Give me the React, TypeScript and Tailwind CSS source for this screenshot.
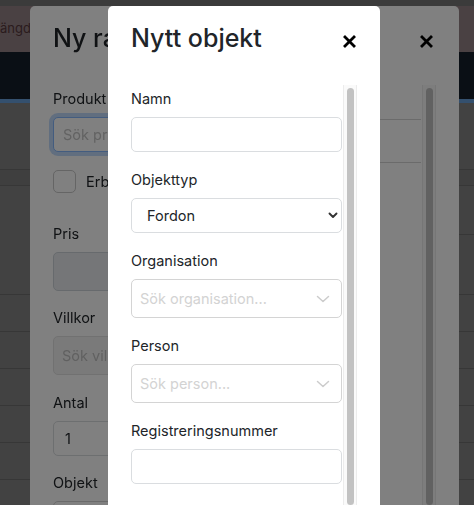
import React from 'react';

const rowLines = [37, 37, 37, 37, 37];

function CloseIcon() {
  return (
    <svg width="13" height="13" viewBox="0 0 13 13" className="mt-[12px] shrink-0">
      <path d="M2 2L11 11M11 2L2 11" stroke="#000" strokeWidth="2.8" strokeLinecap="square" />
    </svg>
  );
}

function ModalHeader({ title, pr }: { title: string; pr: string }) {
  return (
    <div className={`flex h-[79px] shrink-0 items-start justify-between pl-[23px] pt-[17px] ${pr}`}>
      <h2 className="whitespace-nowrap text-[25px] font-medium leading-[30px] text-[#212529]">{title}</h2>
      <CloseIcon />
    </div>
  );
}

function Scrollbar() {
  return (
    <div className="ml-px w-[14px] shrink-0 border-x border-[#ececec] bg-[#fafafa] pt-[3px]">
      <div className="mx-auto h-full w-[7px] rounded-full bg-[#c2c2c2]" />
    </div>
  );
}

function Label({ children }: { children: React.ReactNode }) {
  return <div className="mb-[7px] h-[22px] whitespace-nowrap text-[14.5px] leading-[22px] text-[#212529]">{children}</div>;
}

function Field({ label, mb = 'mb-[17px]', children }: { label: string; mb?: string; children: React.ReactNode }) {
  return (
    <div className={mb}>
      <Label>{label}</Label>
      {children}
    </div>
  );
}

function TextInput({ value }: { value?: string }) {
  return (
    <div className="flex h-[35px] items-center rounded-[5px] border border-[#dadde0] bg-white pl-[11px] text-[14.5px] text-[#212529]">
      {value}
    </div>
  );
}

function SelectBox({ value }: { value: string }) {
  return (
    <div className="flex h-[35px] items-center justify-between rounded-[5px] border border-[#dadde0] bg-white pl-[15px] pr-[3px] text-[14.5px] text-[#212529]">
      <span>{value}</span>
      <svg width="10" height="7" viewBox="0 0 10 7">
        <path d="M1.5 1.5L5 5L8.5 1.5" fill="none" stroke="#333" strokeWidth="1.9" strokeLinecap="round" strokeLinejoin="round" />
      </svg>
    </div>
  );
}

function SearchSelect({ placeholder, disabled }: { placeholder: string; disabled?: boolean }) {
  return (
    <div
      className={`flex h-[39px] items-center justify-between rounded-[5px] border pl-[8px] pr-[8px] text-[14.5px] ${
        disabled ? 'border-[#e2e2e2] bg-[#f4f4f4] text-[#c0c0c0]' : 'border-[#d4d4d4] bg-white text-[#d3d3d3]'
      }`}
    >
      <span className="truncate">{placeholder}</span>
      <svg width="20" height="20" viewBox="0 0 20 20" className="shrink-0">
        <path d="M4.5 7.5L10 12.5L15.5 7.5" fill="none" stroke="#cccccc" strokeWidth="1.5" strokeLinecap="round" strokeLinejoin="round" />
      </svg>
    </div>
  );
}

function BackgroundPage() {
  return (
    <div className="h-[505px] bg-[#424242]">
      <div className="h-[6px] bg-[#3b3b3b]" />
      <div className="flex h-[46px] items-center bg-[#4a4143] text-[13px] text-[#2a1b1d]">
        <span className="whitespace-nowrap">ängd</span>
      </div>
      <div className="h-[51px] border-b-4 border-[#34506e] bg-[#0a0f15]" />
      <div className="h-[67px] border-b border-[#373737]" />
      <div className="h-[16px] border-b border-[#373737] bg-[#3f3f3f]" />
      <div className="flex h-[109px] border-b border-[#373737]">
        <div className="w-[30px]" />
        <div className="flex-1">
          <div className="h-[49px] border-b border-[#373737]" />
        </div>
      </div>
      {rowLines.map((h, i) => (
        <div key={i} className="h-[37px] border-b border-[#373737]" />
      ))}
    </div>
  );
}

function FirstModal() {
  return (
    <div className="absolute bottom-0 left-[30px] top-[6px] flex w-[429px] flex-col overflow-hidden rounded-t-[5px] bg-white brightness-50">
      <ModalHeader title="Ny rad" pr="pr-[26px]" />
      <div className="relative flex min-h-0 flex-1 pl-[23px] pr-[23px]">
        <div className="w-[300px] shrink-0 pt-[3px]">
          <Field label="Produkt" mb="mb-[18px]">
            <div className="flex h-[35px] items-center rounded-[5px] border border-[#86b7fe] bg-white pl-[9px] text-[14.5px] text-[#c4c4c4] ring-4 ring-[#0d6efd]/25">
              Sök produkt...
            </div>
          </Field>
          <div className="flex h-[23px] items-center gap-[10px]">
            <div className="h-[23px] w-[23px] rounded-[5px] border border-[#c9c9c9] bg-white" />
            <span className="text-[14.5px] text-[#212529]">Erbjudande</span>
          </div>
          <div className="mt-[30px]">
            <Field label="Pris" mb="mb-[16px]">
              <div className="h-[39px] rounded-[5px] border border-[#ced4da] bg-[#e9ecef]" />
            </Field>
          </div>
          <Field label="Villkor">
            <SearchSelect placeholder="Sök villkor..." disabled />
          </Field>
          <Field label="Antal" mb="mb-[16px]">
            <TextInput value="1" />
          </Field>
          <Field label="Objekt">
            <SearchSelect placeholder="Sök objekt..." />
          </Field>
        </div>
        <div className="flex-1" />
        <Scrollbar />
        <div className="absolute left-[260px] right-[38px] top-[34px] h-[44px] border-y border-[#d6d6d6]" />
      </div>
    </div>
  );
}

function SecondModal() {
  return (
    <div className="absolute bottom-0 left-[108px] top-[6px] flex w-[272px] flex-col overflow-hidden rounded-t-[5px] bg-white">
      <ModalHeader title="Nytt objekt" pr="pr-[24px]" />
      <div className="flex min-h-0 flex-1 pl-[23px] pr-[23px]">
        <div className="min-w-0 flex-1 pt-[3px]">
          <Field label="Namn">
            <TextInput />
          </Field>
          <Field label="Objekttyp">
            <SelectBox value="Fordon" />
          </Field>
          <Field label="Organisation">
            <SearchSelect placeholder="Sök organisation..." />
          </Field>
          <Field label="Person">
            <SearchSelect placeholder="Sök person..." />
          </Field>
          <Field label="Registreringsnummer">
            <TextInput />
          </Field>
        </div>
        <Scrollbar />
      </div>
    </div>
  );
}

export default function App() {
  return (
    <div className="relative h-[505px] w-full overflow-hidden font-['Inter','Liberation_Sans',sans-serif]">
      <BackgroundPage />
      <FirstModal />
      <SecondModal />
    </div>
  );
}
